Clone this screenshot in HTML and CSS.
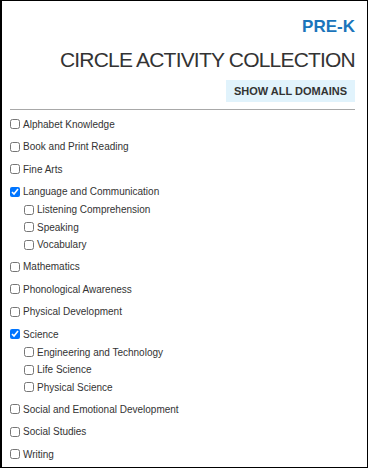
FILE: index.html
```html
<!DOCTYPE html>
<html lang="en">
<head>
    <meta charset="UTF-8">
    <meta name="viewport" content="width=device-width, initial-scale=1.0">
    <title>Circle Activity Collection</title>
    <link rel="stylesheet" href="styles.css">
</head>
<body>
    <div class="panel">
        <div class="header">
            <div class="grade">PRE-K</div>
            <h1 class="title">CIRCLE ACTIVITY COLLECTION</h1>
            <button class="show-all">SHOW ALL DOMAINS</button>
        </div>
        <hr class="divider">
        <ul class="domains">
            <li><label><input type="checkbox"> Alphabet Knowledge</label></li>
            <li><label><input type="checkbox"> Book and Print Reading</label></li>
            <li><label><input type="checkbox"> Fine Arts</label></li>
            <li>
                <label><input type="checkbox" checked> Language and Communication</label>
                <ul class="subdomains">
                    <li><label><input type="checkbox"> Listening Comprehension</label></li>
                    <li><label><input type="checkbox"> Speaking</label></li>
                    <li><label><input type="checkbox"> Vocabulary</label></li>
                </ul>
            </li>
            <li><label><input type="checkbox"> Mathematics</label></li>
            <li><label><input type="checkbox"> Phonological Awareness</label></li>
            <li><label><input type="checkbox"> Physical Development</label></li>
            <li>
                <label><input type="checkbox" checked> Science</label>
                <ul class="subdomains">
                    <li><label><input type="checkbox"> Engineering and Technology</label></li>
                    <li><label><input type="checkbox"> Life Science</label></li>
                    <li><label><input type="checkbox"> Physical Science</label></li>
                </ul>
            </li>
            <li><label><input type="checkbox"> Social and Emotional Development</label></li>
            <li><label><input type="checkbox"> Social Studies</label></li>
            <li><label><input type="checkbox"> Writing</label></li>
        </ul>
    </div>
</body>
</html>
```

FILE: styles.css
```css
/* page */
body {
    margin: 0;
    font-family: "Liberation Sans", Arial, sans-serif;
    color: #333;
    background: #fff;
}

.panel {
    box-sizing: border-box;
    height: 100vh;
    border: 1px solid #000;
    border-left-width: 2px;
    padding: 16px 12px 0 8px;
    overflow: hidden;
}

/* header */
.header {
    display: flex;
    flex-direction: column;
    align-items: flex-end;
}

.grade {
    font-size: 17px;
    line-height: 20px;
    font-weight: bold;
    color: #1b75bb;
}

.title {
    margin: 10px 0 0;
    font-size: 21px;
    line-height: 26px;
    font-weight: normal;
    letter-spacing: -0.8px;
    color: #333;
}

.show-all {
    margin-top: 7px;
    height: 22px;
    padding: 0 8px;
    border: none;
    background: #e1f3fc;
    font-family: inherit;
    font-size: 11px;
    font-weight: bold;
    color: #333;
}

.divider {
    margin: 7px 0 0;
    border: none;
    border-top: 1px solid #a8a8a8;
}

/* domain list */
.domains,
.subdomains {
    list-style: none;
    margin: 0;
    padding: 0;
}

.domains {
    margin-top: 3px;
    font-size: 10px;
}

.domains > li {
    padding: 2px 0;
}

.domains label {
    display: flex;
    align-items: center;
    gap: 3px;
    height: 18.5px;
}

.subdomains {
    padding-left: 14px;
}

.subdomains label {
    height: 17.5px;
}

.domains input {
    width: 10px;
    height: 10px;
    margin: 0;
}
```
